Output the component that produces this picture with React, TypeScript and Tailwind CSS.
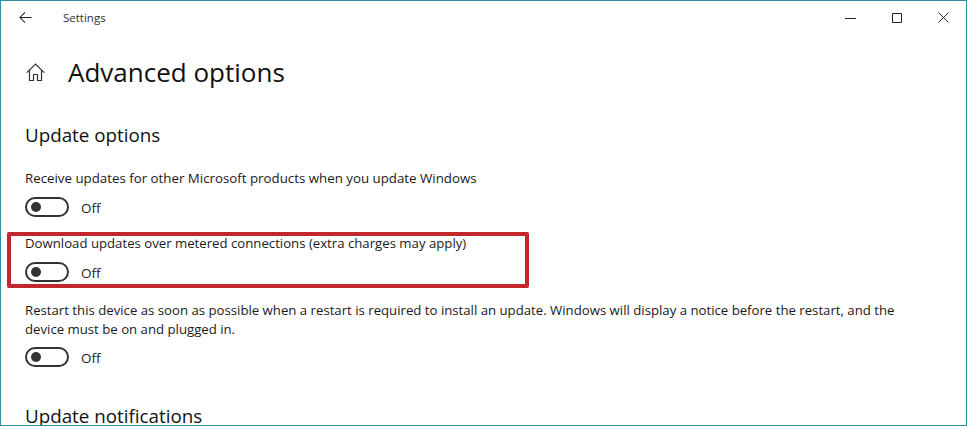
import React from "react";

const font = "font-['Open_Sans','Noto_Sans',sans-serif]";

function Toggle() {
  return (
    <div className="mt-[9px] flex h-[20px] items-center">
      <div className="flex h-[20px] w-[44px] items-center rounded-full border-2 border-[#333] pl-[4px]">
        <div className="h-[10px] w-[10px] rounded-full bg-[#333]" />
      </div>
      <span className="ml-[12px] pt-[1px] text-[13.5px] leading-[20px] text-[#222]">Off</span>
    </div>
  );
}

export default function App() {
  return (
    <div className={`${font} relative h-[426px] w-[967px] overflow-hidden border border-[#2f8ca3] bg-white text-[#1a1a1a]`}>
      <div className="flex h-[33px] items-center">
        <svg className="ml-[18px] h-[13px] w-[13px]" viewBox="0 0 14 14" fill="none" stroke="#222" strokeWidth="1.1">
          <path d="M13.5 7H1M6.5 1.5 1 7l5.5 5.5" />
        </svg>
        <span className="ml-[31px] text-[11.5px] text-[#333]">Settings</span>
        <div className="ml-auto mr-[17px] flex items-center gap-[36px]">
          <svg className="h-[10px] w-[11px]" viewBox="0 0 11 10" fill="none" stroke="#222"><path d="M0 5.5h11" /></svg>
          <svg className="h-[10px] w-[10px]" viewBox="0 0 10 10" fill="none" stroke="#222"><path d="M.5.5h9v9h-9z" /></svg>
          <svg className="h-[11px] w-[11px]" viewBox="0 0 11 11" fill="none" stroke="#222"><path d="m.5.5 10 10M10.5.5l-10 10" /></svg>
        </div>
      </div>

      <div className="mt-[19px] flex items-center pl-[25px]">
        <svg className="h-[19px] w-[19px]" viewBox="0 0 19 19" fill="none" stroke="#333" strokeWidth="1.2">
          <path d="M.8 9.6 9.5 1l8.7 8.6M3.5 7.4V17.5h4v-6h4v6h4V7.4" />
        </svg>
        <h1 className="ml-[23px] text-[26px] font-normal leading-[38px] text-[#111]">Advanced options</h1>
      </div>

      <div className="pl-[24px]">
        <h2 className="mt-[30px] text-[18.8px] font-normal leading-[28px] text-[#111]">Update options</h2>

        <p className="mt-[19px] text-[13.3px] leading-[20px]">Receive updates for other Microsoft products when you update Windows</p>
        <Toggle />

        <p className="mt-[16px] text-[13.2px] leading-[20px]">Download updates over metered connections (extra charges may apply)</p>
        <Toggle />

        <p className="mt-[19px] w-[885px] text-[13.2px] leading-[18.5px]">
          Restart this device as soon as possible when a restart is required to install an update. Windows will display a notice before the restart, and the device must be on and plugged in.
        </p>
        <Toggle />

        <h2 className="mt-[35px] text-[18.8px] font-normal leading-[28px] text-[#111]">Update notifications</h2>
      </div>

      <div className="absolute left-[6px] top-[231px] h-[56px] w-[522px] rounded-[2px] border-[4px] border-[#c4262e]" />
    </div>
  );
}
